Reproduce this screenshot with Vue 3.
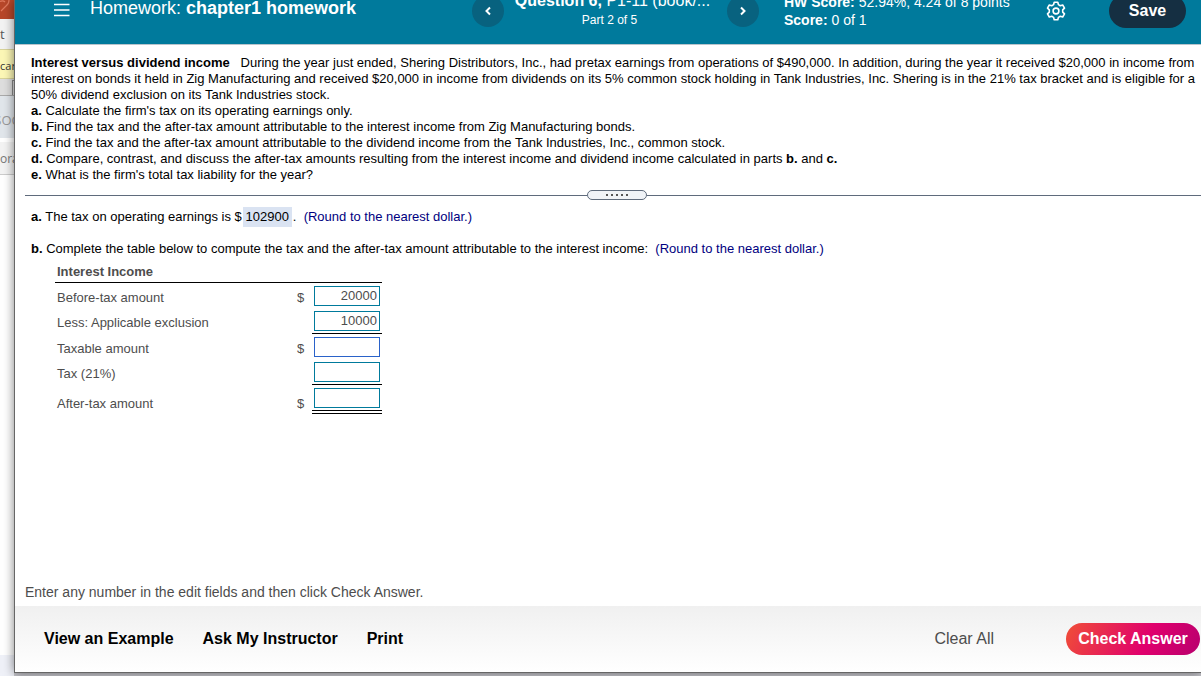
<script setup>
import { ref } from 'vue'

const parts = [
  { key: 'a.', text: "Calculate the firm's tax on its operating earnings only." },
  { key: 'b.', text: 'Find the tax and the after-tax amount attributable to the interest income from Zig Manufacturing bonds.' },
  { key: 'c.', text: 'Find the tax and the after-tax amount attributable to the dividend income from the Tank Industries, Inc., common stock.' }
]

const rows = ref([
  { id: 'before', label: 'Before-tax amount', sign: '$', value: '20000', rule: '' },
  { id: 'exclusion', label: 'Less: Applicable exclusion', sign: '', value: '10000', rule: 'single' },
  { id: 'taxable', label: 'Taxable amount', sign: '$', value: '', rule: '', active: true },
  { id: 'tax', label: 'Tax (21%)', sign: '', value: '', rule: 'single' },
  { id: 'after', label: 'After-tax amount', sign: '$', value: '', rule: 'double' }
])
</script>

<template>
  <div class="page">
    <aside class="behind">
      <div class="strip red">
        <svg width="14" height="19" viewBox="0 0 14 19" fill="none" stroke="#e07a5e" stroke-width="1.2">
          <path d="M0 1.500Q3 0 5 2M9 0Q9 4 6 6L1 11" />
        </svg>
      </div>
      <div class="strip tab">t</div>
      <div class="strip yellow">car</div>
      <div class="strip grey"><i></i></div>
      <div class="strip blue">SOC</div>
      <div class="strip pale">ora</div>
      <div class="strip blank"></div>
      <div class="strip base"></div>
    </aside>

    <div class="window">
      <header class="bar">
        <button class="menu" aria-label="Menu">
          <svg width="16" height="14" viewBox="0 0 16 14" stroke="#fff" stroke-width="1.5">
            <path d="M0 1.5H15.5M0 7H15.5M0 12.5H15.5" />
          </svg>
        </button>
        <h1 class="title">Homework: <b>chapter1 homework</b></h1>
        <button class="round" aria-label="Previous question">
          <svg width="8" height="10" viewBox="0 0 8 10" fill="none" stroke="#fff" stroke-width="2"><path d="M6 1.5L2.5 5L6 8.5" /></svg>
        </button>
        <div class="question">
          <div class="qname"><b>Question 6,</b> P1-11 (book/...</div>
          <div class="qpart">Part 2 of 5</div>
        </div>
        <button class="round" aria-label="Next question">
          <svg width="8" height="10" viewBox="0 0 8 10" fill="none" stroke="#fff" stroke-width="2"><path d="M2 1.5L5.500 5L2 8.500" /></svg>
        </button>
        <div class="score">
          <div><b>HW Score:</b> 52.94%, 4.24 of 8 points</div>
          <div><b>Score:</b> 0 of 1</div>
        </div>
        <button class="gear" aria-label="Settings">
          <svg width="20" height="20" viewBox="0 0 20 20" fill="none" stroke="#fff" stroke-width="1.600" stroke-linejoin="round">
            <path d="M7.600 3.600L8.200 1.200H11.800L12.400 3.600L14.300 4.700L16.700 4L18.500 7.100L16.700 8.900V11.100L18.500 12.900L16.700 16L14.300 15.300L12.400 16.400L11.800 18.800H8.200L7.600 16.400L5.700 15.300L3.300 16L1.500 12.900L3.300 11.100V8.900L1.500 7.100L3.300 4L5.700 4.700Z" />
            <circle cx="10" cy="10" r="2.900" />
          </svg>
        </button>
        <button class="save">Save</button>
      </header>

      <main class="body">
        <section class="problem">
          <p><b>Interest versus dividend income</b>&nbsp;&nbsp; During the year just ended, Shering Distributors, Inc., had pretax earnings from operations of $490,000. In addition, during the year it received $20,000 in income from<br>
          interest on bonds it held in Zig Manufacturing and received $20,000 in income from dividends on its 5% common stock holding in Tank Industries, Inc. Shering is in the 21% tax bracket and is eligible for a<br>
          50% dividend exclusion on its Tank Industries stock.</p>
          <p v-for="p in parts" :key="p.key"><b>{{ p.key }}</b> {{ p.text }}</p>
          <p><b>d.</b> Compare, contrast, and discuss the after-tax amounts resulting from the interest income and dividend income calculated in parts <b>b.</b> and <b>c.</b></p>
          <p><b>e.</b> What is the firm's total tax liability for the year?</p>
        </section>

        <div class="divider">
          <button class="grip" aria-label="Resize panes"><i v-for="n in 5" :key="n"></i></button>
        </div>

        <section class="work">
          <p class="answer"><b>a.</b> The tax on operating earnings is $<span class="given">102900</span>.&nbsp; <span class="hint">(Round to the nearest dollar.)</span></p>
          <p class="task"><b>b.</b> Complete the table below to compute the tax and the after-tax amount attributable to the interest income:&nbsp; <span class="hint">(Round to the nearest dollar.)</span></p>
          <table>
            <thead>
              <tr><th colspan="3">Interest Income</th></tr>
            </thead>
            <tbody>
              <tr v-for="r in rows" :key="r.id">
                <td class="name"><label :for="r.id">{{ r.label }}</label></td>
                <td class="sign">{{ r.sign }}</td>
                <td class="cell" :class="r.rule"><input :id="r.id" v-model="r.value" type="text" :class="{ active: r.active }"></td>
              </tr>
            </tbody>
          </table>
        </section>

        <p class="note">Enter any number in the edit fields and then click Check Answer.</p>
      </main>

      <footer class="actions">
        <button class="plain">View an Example</button>
        <button class="plain">Ask My Instructor</button>
        <button class="plain">Print</button>
        <button class="clear">Clear All</button>
        <button class="check">Check Answer</button>
      </footer>
    </div>
  </div>
</template>

<style>
body { margin: 0; }
</style>

<style scoped>
* { box-sizing: border-box; }
p, h1 { margin: 0; }
button { font: inherit; border: 0; padding: 0; background: none; color: inherit; cursor: pointer; }
svg { display: block; }

.page {
  display: flex;
  min-height: 100vh;
  padding-bottom: 3px;
  overflow: hidden;
  background: #c6c6cc;
  font-family: "Liberation Sans", Arial, sans-serif;
  font-size: 13px;
  color: #000;
}

.behind { display: flex; flex-direction: column; width: 14px; margin-bottom: -3px; flex: none; background: #fff; color: #555; font-family: "Open Sans", sans-serif; }
.strip { display: flex; align-items: center; flex: none; }
.red { height: 19px; background: #b7472a; }
.tab { height: 30px; background: #f3f3f3; }
.yellow { height: 30px; padding-top: 3px; background: #fcf7b6; border: solid #d8d39a; border-width: 1px 0; color: #333; font-size: 11px; }
.grey { height: 17px; background: #dedede; border-bottom: 1px solid #aaa; justify-content: flex-end; align-items: flex-end; }
.grey i { width: 2px; height: 15px; border: solid #888; border-width: 1px 0 0 1px; }
.blue { height: 42px; padding-top: 6px; justify-content: center; background: #e1e6eb; color: #999; }
.pale { height: 37px; background: #f3f3f3; border-top: 4px solid #fff; border-bottom: 1px solid #ccc; color: #777; font-size: 12px; }
.blank { flex: 1; background: #fff; }
.base { height: 21px; background: #eff1f8; }

.window {
  position: relative;
  display: flex;
  flex-direction: column;
  flex: 1;
  min-width: 0;
  background: #fff;
  border: solid #666;
  border-width: 0 0 1px 1px;
  box-shadow: 0 0 10px rgba(0, 0, 0, 0.5);
}

.bar {
  display: flex;
  align-items: flex-end;
  height: 45px;
  padding: 0 15px 15px 39px;
  overflow: hidden;
  background: #007a9c;
  border-bottom: 1px solid #b8c4cc;
  color: #fff;
}
.bar > * { flex: none; }
.menu { display: flex; align-items: center; height: 38px; }
.bar .title { flex: 1; padding-left: 20px; font-size: 18px; line-height: 42px; font-weight: 400; white-space: nowrap; }
.round { display: grid; place-items: center; width: 32px; height: 32px; margin-bottom: 2px; border-radius: 50%; background: #08627f; }
.question { width: 223px; text-align: center; line-height: 18px; }
.qname { padding-right: 6px; font-size: 16px; line-height: 20px; white-space: nowrap; }
.qpart { padding-right: 12px; font-size: 12px; }
.score { width: 287px; padding-left: 25px; font-size: 14px; line-height: 18px; white-space: nowrap; }
.gear { display: flex; align-items: center; height: 36px; margin-right: 43px; }
.save { width: 77px; height: 34px; margin-bottom: 1px; border-radius: 17px; background: #152f42; font-size: 16px; font-weight: 700; }

.body { display: flex; flex-direction: column; flex: 1; padding: 10px 0 0 10px; line-height: 16px; }
.problem { padding-left: 6px; white-space: nowrap; }

.divider { display: flex; align-items: center; margin: 7px -8px 0 0; }
.divider::before, .divider::after { content: ""; flex: 1; height: 1px; background: #5f6b7c; }
.grip { display: flex; align-items: center; justify-content: center; gap: 3px; width: 60px; height: 10px; border: 1px solid #5f6b7c; border-radius: 5px; background: #f0f3f7; }
.grip i { width: 2px; height: 2px; background: #555; }

.work { padding: 7px 6px 0; }
.answer { line-height: 20px; }
.given { display: inline-block; width: 49px; margin: 0 1px; text-align: center; background: #dae3f2; }
.task { margin-top: 14px; }
.hint { color: #000080; }

table { width: 327px; margin: 7px 0 0 24px; border-collapse: separate; border-spacing: 0; color: #4d4d4d; }
th { padding: 0 2px 2px; text-align: left; border-bottom: 1px solid #000; }
td { padding: 0; }
td.name { padding: 4px 2px 0; }
td.sign { width: 15px; padding-top: 4px; }
td.cell { width: 70px; padding: 3px 2px 2px; }
td.single { border-bottom: 1px solid #000; }
td.double { border-bottom: 4px double #000; }
tr:last-child td.name, tr:last-child td.sign { padding-top: 8px; }
input { display: block; width: 100%; height: 20px; padding: 0 2px 2px; border: 1px solid #007a9c; border-radius: 0; outline: 0; background: #fff; color: #4d4d4d; font: inherit; text-align: right; }
input.active { border-color: #2a62c9; }

.note { margin-top: auto; padding-bottom: 6px; font-size: 14px; color: #4d4d4d; }

.actions {
  display: flex;
  align-items: center;
  gap: 29px;
  height: 66px;
  padding: 0 1px 0 29px;
  background: linear-gradient(#f0f0f0, #fff);
  font-size: 16px;
}
.plain { font-weight: 700; }
.clear { margin-left: auto; color: #4d4d4d; }
.check { width: 134px; height: 32px; margin-left: 43px; border-radius: 16px; background: linear-gradient(115deg, #f04e37, #e0006d 60%, #b8006e); color: #fff; font-weight: 700; }
</style>
